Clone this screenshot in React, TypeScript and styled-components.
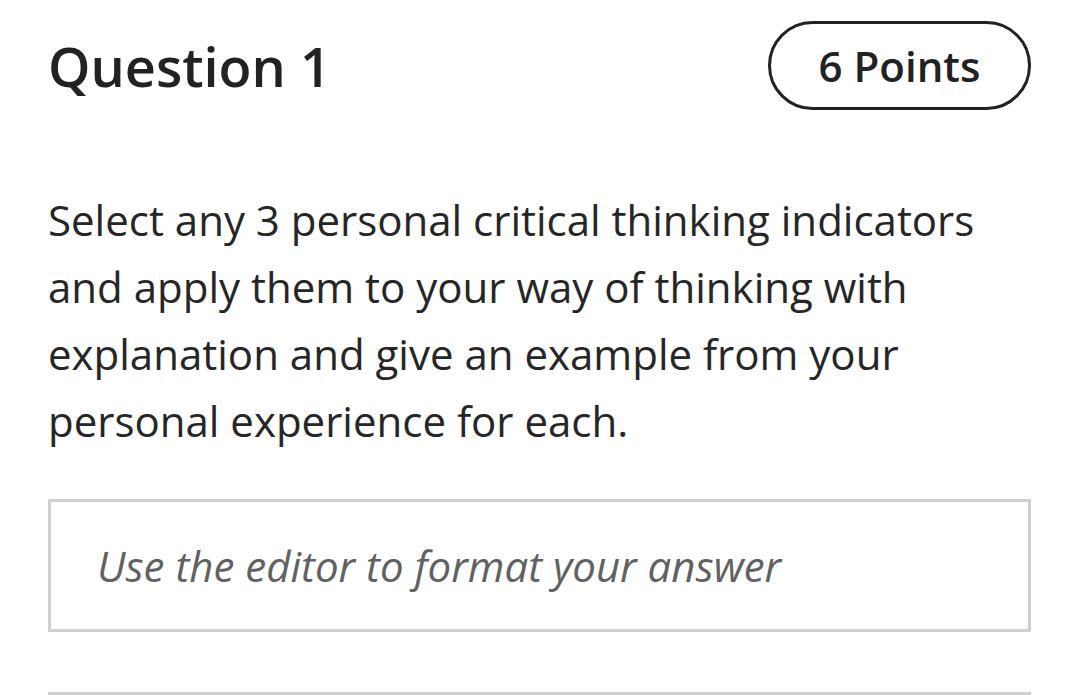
import styled, { createGlobalStyle } from 'styled-components';

const GlobalStyle = createGlobalStyle`
  html, body {
    margin: 0;
    padding: 0;
    background: #ffffff;
  }
  body {
    font-family: 'Open Sans', 'Noto Sans', sans-serif;
    color: #262626;
  }
`;

const Page = styled.div`
  width: 1080px;
  height: 695px;
  box-sizing: border-box;
  padding: 21px 49px 0 48px;
  overflow: hidden;
`;

const Header = styled.div`
  display: flex;
  align-items: center;
  justify-content: space-between;
`;

const Title = styled.h1`
  margin: 0;
  font-size: 54px;
  font-weight: 600;
  color: #222;
`;

const PointsBadge = styled.div`
  box-sizing: border-box;
  width: 263px;
  height: 89px;
  border: 3px solid #222;
  border-radius: 45px;
  display: flex;
  align-items: center;
  justify-content: center;
  font-size: 42px;
  font-weight: 600;
  color: #222;
`;

const Prompt = styled.p`
  margin: 76px 0 0;
  font-size: 42px;
  line-height: 67px;
  color: #262626;
`;

const AnswerBox = styled.div`
  box-sizing: border-box;
  margin-top: 45px;
  height: 133px;
  border: 3px solid #cfcfcf;
  display: flex;
  align-items: center;
  padding-left: 46px;
`;

const Placeholder = styled.span`
  font-size: 42px;
  font-style: italic;
  color: #616161;
`;

const Divider = styled.div`
  margin-top: 60px;
  height: 3px;
  background: #cfcfcf;
`;

export default function App() {
  return (
    <>
      <GlobalStyle />
      <Page>
        <Header>
          <Title>Question 1</Title>
          <PointsBadge>6 Points</PointsBadge>
        </Header>
        <Prompt>
          Select any 3 personal critical thinking indicators and apply them to
          your way of thinking with explanation and give an example from your
          personal experience for each.
        </Prompt>
        <AnswerBox>
          <Placeholder>Use the editor to format your answer</Placeholder>
        </AnswerBox>
        <Divider />
      </Page>
    </>
  );
}
